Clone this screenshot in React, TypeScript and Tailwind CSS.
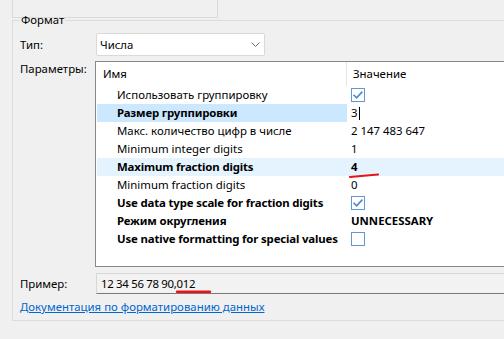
import React from "react";

const Check = ({ checked }: { checked: boolean }) => (
  <svg width="14" height="14" viewBox="0 0 14 14" className="block">
    <rect x="0.5" y="0.5" width="13" height="13" fill="white" stroke="#5f97d8" strokeWidth="1" />
    {checked && (
      <path d="M2.5 6.8 L5.6 9.8 L11.4 3.6" fill="none" stroke="#4a87d4" strokeWidth="1.6" />
    )}
  </svg>
);

type Row = {
  name: string;
  bold?: boolean;
  value?: string;
  valueBold?: boolean;
  check?: boolean;
  selected?: boolean;
  hover?: boolean;
  caret?: boolean;
};

const rows: Row[] = [
  { name: "Использовать группировку", check: true },
  { name: "Размер группировки", bold: true, value: "3", selected: true, caret: true },
  { name: "Макс. количество цифр в числе", value: "2 147 483 647" },
  { name: "Minimum integer digits", value: "1" },
  { name: "Maximum fraction digits", bold: true, value: "4", valueBold: true, hover: true },
  { name: "Minimum fraction digits", value: "0" },
  { name: "Use data type scale for fraction digits", bold: true, check: true },
  { name: "Режим округления", bold: true, value: "UNNECESSARY", valueBold: true },
  { name: "Use native formatting for special values", bold: true, check: false },
];

export default function App() {
  return (
    <div className="relative w-[504px] h-[339px] overflow-hidden bg-[#f0f0f0] text-[11.4px] leading-[16px] text-black whitespace-nowrap font-['Noto_Sans',sans-serif]">
      <div className="ml-[12px] w-[206px] h-[18px] border-x border-b border-[#dadada]" />
      <fieldset className="ml-[12px] -mt-[6px] w-[520px] h-[309px] border border-[#dcdcdc] pl-[7px]">
        <legend className="px-[1px] leading-[16px]">Формат</legend>
        <div className="mt-[5px] flex items-center h-[23px]">
          <div className="w-[76px]">Тип:</div>
          <div className="w-[169px] h-[23px] bg-white border border-[#d9d9d9] rounded-[2px] flex items-center justify-between pl-[3px] pr-[4px]">
            <span>Числа</span>
            <svg width="9" height="5" viewBox="0 0 9 5">
              <path d="M0.5 0.5 L4.5 4.5 L8.5 0.5" fill="none" stroke="#707070" strokeWidth="1" />
            </svg>
          </div>
        </div>
        <div className="mt-[5px] flex">
          <div className="w-[75px]">Параметры:</div>
          <div className="w-[430px] h-[206px] border border-[#828790] bg-white pl-px">
            <div className="flex h-[24px] items-center">
              <div className="w-[250px] h-full border-r border-[#e5e5e5] pl-[6px] flex items-center">Имя</div>
              <div className="pl-[6px]">Значение</div>
            </div>
            {rows.map((r, i) => (
              <div key={i} className={`flex h-[18px] items-center ${r.hover ? "bg-[#e5f3ff]" : ""}`}>
                <div
                  className={`w-[250px] shrink-0 h-full flex items-center pl-[20px] ${r.selected ? "bg-[#cce8ff]" : ""} ${r.bold ? "font-bold tracking-[-0.15px]" : ""}`}
                >
                  {r.name}
                </div>
                <div className={`pl-[4px] flex items-center h-full ${r.valueBold ? "font-bold" : ""}`}>
                  {r.check !== undefined ? (
                    <Check checked={r.check} />
                  ) : (
                    <span className="flex items-center">
                      {r.value}
                      {r.caret && <span className="ml-px inline-block w-px h-[13px] bg-black" />}
                    </span>
                  )}
                </div>
              </div>
            ))}
          </div>
        </div>
        <div className="mt-[6px] flex items-center">
          <div className="w-[76px]">Пример:</div>
          <div className="w-[430px] h-[21px] bg-[#f2f2f2] border border-[#d8d8d8] border-b-[#7a7a7a] pl-[4px] flex items-center tracking-[-0.3px]">
            12 34 56 78 90,012
          </div>
        </div>
        <div className="mt-[5px]">
          <a className="text-[#0066cc] underline">Документация по форматированию данных</a>
        </div>
      </fieldset>
      <svg className="absolute left-0 top-0 pointer-events-none" width="504" height="339">
        <path d="M350 177 L378 174.5" stroke="#e5141a" strokeWidth="2.2" fill="none" strokeLinecap="round" />
        <path d="M177 291.8 L210 291.8" stroke="#e5141a" strokeWidth="2.4" fill="none" strokeLinecap="round" />
      </svg>
    </div>
  );
}
